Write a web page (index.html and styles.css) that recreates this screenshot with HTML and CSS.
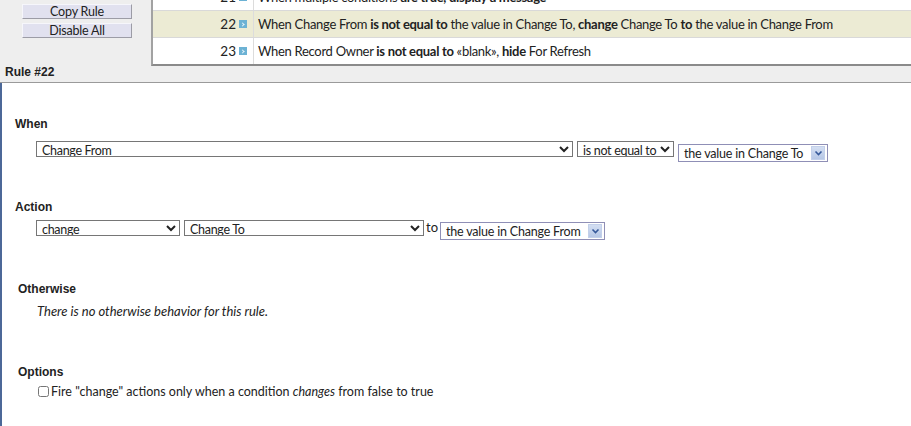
FILE: index.html
```html
<!DOCTYPE html>
<html lang="en">
<head>
    <meta charset="UTF-8">
    <meta name="viewport" content="width=device-width, initial-scale=1.0">
    <title>Rules</title>
    <link rel="stylesheet" href="styles.css">
</head>
<body>
    <div class="top">
        <div class="top-row">
            <div class="tools">
                <span class="tool-btn">Add Rule</span>
                <span class="tool-btn">Copy Rule</span>
                <span class="tool-btn">Disable All</span>
            </div>
            <div class="rules">
                <ul class="rule-list">
                    <li class="rule">
                        <span class="rule-num">21<i class="go"></i></span>
                        <span class="rule-text">When multiple conditions <b>are true, display a message</b></span>
                    </li>
                    <li class="rule selected">
                        <span class="rule-num">22<i class="go"></i></span>
                        <span class="rule-text">When Change From <b>is not equal to</b> the value in Change To, <b>change</b> Change To <b>to</b> the value in Change From</span>
                    </li>
                    <li class="rule">
                        <span class="rule-num">23<i class="go"></i></span>
                        <span class="rule-text">When Record Owner <b>is not equal to</b> «blank», <b>hide</b> For Refresh</span>
                    </li>
                </ul>
            </div>
        </div>
        <h3 class="rule-title">Rule #22</h3>
    </div>

    <div class="editor">
        <div class="block block-when">
            <h4 class="block-label">When</h4>
            <div class="line">
                <select class="sel sel-field"><option>Change From</option></select>
                <select class="sel sel-op"><option>is not equal to</option></select>
                <span class="combo combo-when">
                    <span class="combo-text">the value in Change To</span>
                    <span class="combo-btn"><svg width="9" height="6" viewBox="0 0 9 6"><path d="M1.5 1.5 L4.5 4.5 L7.5 1.5" fill="none" stroke="#35589a" stroke-width="1.6"/></svg></span>
                </span>
            </div>
        </div>

        <div class="block block-action">
            <h4 class="block-label">Action</h4>
            <div class="line">
                <select class="sel sel-verb"><option>change</option></select>
                <select class="sel sel-target"><option>Change To</option></select>
                <span class="word">to</span>
                <span class="combo combo-action">
                    <span class="combo-text">the value in Change From</span>
                    <span class="combo-btn"><svg width="9" height="6" viewBox="0 0 9 6"><path d="M1.5 1.5 L4.5 4.5 L7.5 1.5" fill="none" stroke="#35589a" stroke-width="1.6"/></svg></span>
                </span>
            </div>
        </div>

        <div class="block block-otherwise">
            <h4 class="block-label">Otherwise</h4>
            <p class="note">There is no otherwise behavior for this rule.</p>
        </div>

        <div class="block block-options">
            <h4 class="block-label">Options</h4>
            <label class="option">
                <input type="checkbox" class="check">
                <span>Fire "change" actions only when a condition <i>changes</i> from false to true</span>
            </label>
        </div>
    </div>
</body>
</html>
```

FILE: styles.css
```css
* {
    box-sizing: border-box;
}
body {
    margin: 0;
    font-family: Lato, "Open Sans", sans-serif;
    font-size: 12px;
    color: #222;
    background: #fff;
    overflow: hidden;
}
.top {
    background: #eeeeee;
    border-bottom: 1px solid #9a9a9a;
}
.top-row {
    display: flex;
    height: 66px;
}
.tools {
    width: 151px;
    flex: none;
    display: flex;
    flex-direction: column;
    gap: 4px;
    padding-left: 22px;
    margin-top: -15px;
}
.tool-btn {
    display: block;
    width: 110px;
    height: 15px;
    line-height: 13px;
    text-align: center;
    background: #e1e1ef;
    border: 1px solid;
    border-color: #f6f6fb #9c9ca6 #9c9ca6 #f6f6fb;
    color: #222;
    font-size: 12.5px;
    letter-spacing: -0.2px;
}
.rules {
    flex: 1;
    min-width: 0;
    background: #fff;
    border-left: 2px solid #a2a2a2;
    border-bottom: 2px solid #8a8a8a;
    overflow: hidden;
}
.rule-list {
    list-style: none;
    margin: -16px 0 0 0;
    padding: 0;
}
.rule {
    display: flex;
    height: 27px;
    border-bottom: 1px solid #d9d9d9;
    white-space: nowrap;
}
.rule.selected {
    background: #ecebd4;
}
.rule-num {
    width: 101px;
    flex: none;
    display: flex;
    align-items: center;
    justify-content: flex-end;
    padding-right: 6px;
    border-right: 1px solid #dcdcdc;
    font-size: 13.5px;
}
.go {
    width: 8px;
    height: 8px;
    margin-left: 3px;
    background: #6cb2d4;
    position: relative;
}
.go::after {
    content: "";
    position: absolute;
    left: 2px;
    top: 2.5px;
    width: 2px;
    height: 2px;
    border: solid #e8f4fa;
    border-width: 1px 1px 0 0;
    transform: rotate(45deg);
}
.rule-text {
    display: block;
    padding-left: 4px;
    line-height: 26px;
    font-size: 13px;
    letter-spacing: -0.3px;
}
.rule-text b {
    font-weight: 700;
}
.rule-title {
    margin: 0;
    padding: 0 0 4px 5px;
    height: 16px;
    line-height: 12px;
    font-family: "Liberation Sans", Arial, sans-serif;
    font-size: 12px;
    font-weight: bold;
}
.editor {
    border-left: 2px solid #4c6898;
    height: 343px;
}
.block-label {
    margin: 0;
    font-family: "Liberation Sans", Arial, sans-serif;
    font-size: 12px;
    font-weight: bold;
    line-height: 14px;
}
.block-when {
    padding: 34px 0 0 13px;
}
.block-action {
    padding: 38px 0 0 13px;
}
.block-otherwise {
    padding: 42px 0 0 16px;
}
.block-options {
    padding: 46px 0 0 16px;
}
.line {
    display: flex;
    align-items: flex-start;
    gap: 4px;
    margin: 10px 0 0 21px;
}
.block-action .line {
    margin-top: 6px;
}
.sel {
    height: 16px;
    padding: 0 0 0 1px;
    margin: 0;
    font-family: Lato, "Open Sans", sans-serif;
    font-size: 12.5px;
    letter-spacing: -0.3px;
    color: #222;
    border: 1px solid #767676;
    border-radius: 0;
    background: #fff;
}
.sel-field {
    width: 537px;
}
.sel-op {
    width: 97px;
}
.sel-verb {
    width: 144px;
}
.sel-target {
    width: 240px;
}
.word {
    margin: 0 -2px 0 -2px;
    line-height: 15px;
    font-size: 13px;
}
.combo {
    display: flex;
    align-items: center;
    height: 18px;
    margin-top: 3px;
    padding: 0 2px 0 5px;
    border: 1px solid #8f8fb6;
    background: #fff;
    font-size: 12.5px;
    letter-spacing: -0.2px;
}
.combo-when {
    width: 150px;
}
.combo-action {
    width: 165px;
    margin-top: 2px;
}
.combo-text {
    flex: 1;
    white-space: nowrap;
}
.combo-btn {
    width: 14px;
    height: 14px;
    display: flex;
    align-items: center;
    justify-content: center;
    background: linear-gradient(#d3def2, #b6c7e6);
    border: 1px solid #c3d0ea;
}
.note {
    margin: 7px 0 0 19px;
    font-style: italic;
    font-size: 13px;
    line-height: 16px;
}
.option {
    display: flex;
    align-items: center;
    margin: 5px 0 0 20px;
    font-size: 12.5px;
}
.check {
    width: 11px;
    height: 11px;
    margin: 0 2px 0 0;
}
```
